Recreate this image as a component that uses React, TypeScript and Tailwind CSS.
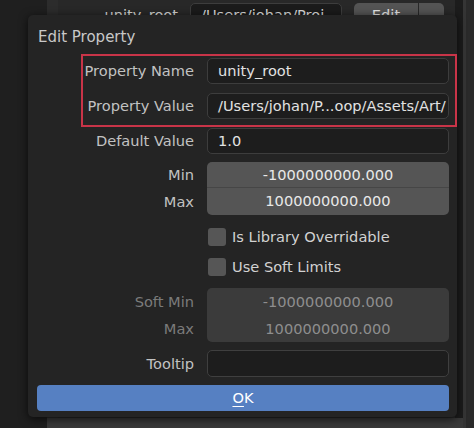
import React from "react";

const font = { fontFamily: '"DejaVu Sans", "Liberation Sans", sans-serif' };

function Field({ value }: { value: string }) {
  return (
    <div className="flex h-[26px] w-[242px] items-center rounded-[5px] border border-[#3d3d3d] bg-[#1d1d1d] pl-[10px] text-[14.6px] text-[#e2e2e2]">
      {value}
    </div>
  );
}

function Row({
  label,
  children,
  dim,
}: {
  label: string;
  children: React.ReactNode;
  dim?: boolean;
}) {
  return (
    <div className="flex items-center">
      <div
        className={`w-[157px] text-right text-[14.6px] ${
          dim ? "text-[#7a7a7a]" : "text-[#c2c2c2]"
        }`}
      >
        {label}
      </div>
      <div className="ml-[13px]">{children}</div>
    </div>
  );
}

function Checkbox({ label }: { label: string }) {
  return (
    <div className="flex h-[26px] items-center pl-[171px]">
      <div className="h-[18px] w-[18px] rounded-[3px] bg-[#565656]" />
      <span className="ml-[6px] text-[14.6px] text-[#d2d2d2]">{label}</span>
    </div>
  );
}

export default function App() {
  return (
    <div
      className="relative flex h-[428px] w-[474px] overflow-hidden bg-[#1e1e1e]"
      style={font}
    >
      {/* background editor panel */}
      <div className="w-[47px] shrink-0 bg-[#1f1f1f]" />
      <div className="flex w-[416px] flex-col">
        <div className="flex flex-1">
          <div className="w-[408px] border-l-[11px] border-[#2c2c2c] bg-[#282828]">
            <div className="mt-[3px] flex h-[24px] items-center">
              <div className="w-[120px] text-right text-[14.6px] text-[#d6d6d6]">
                unity_root
              </div>
              <div className="ml-[12px] flex h-[24px] w-[152px] items-center rounded-[5px] border border-[#3d3d3d] bg-[#1b1b1b] pl-[10px] text-[14.6px] text-[#dcdcdc]">
                /Users/johan/Proj...
              </div>
              <div className="ml-[12px] flex h-[24px] w-[64px] items-center justify-center rounded-l-[5px] bg-[#545454] text-[14.6px] text-[#e6e6e6]">
                Edit
              </div>
              <div className="ml-[1px] h-[24px] w-[25px] rounded-r-[5px] bg-[#545454]" />
            </div>
          </div>
          <div className="w-[8px] bg-[#1c1c1c]" />
        </div>
        <div className="h-[10px] bg-[#3a3a3a]" />
      </div>
      <div className="w-[3px] bg-[#353535]" />
      <div className="flex-1 bg-[#2a2a2a]" />

      {/* Edit Property dialog */}
      <div className="absolute left-[28px] top-[15px] flex h-[402px] w-[429px] flex-col rounded-[5px] bg-[#242424] pl-[9px] pr-[8px] shadow-[0_2px_10px_rgba(0,0,0,0.7)]">
        <div className="h-[43px] pl-[1px] pt-[13px] text-[15px] leading-[18px] text-[#c8c8c8]">
          Edit Property
        </div>

        <div className="flex flex-col gap-[9px]">
          <Row label="Property Name">
            <Field value="unity_root" />
          </Row>
          <Row label="Property Value">
            <Field value="/Users/johan/P...oop/Assets/Art/" />
          </Row>
          <Row label="Default Value">
            <Field value="1.0" />
          </Row>
        </div>

        <div className="mt-[8px] flex">
          <div className="flex w-[157px] flex-col text-right text-[14.6px] text-[#c2c2c2]">
            <div className="flex h-[26px] items-center justify-end">Min</div>
            <div className="flex h-[27px] items-center justify-end">Max</div>
          </div>
          <div className="ml-[13px] flex w-[242px] flex-col overflow-hidden rounded-[5px] bg-[#555555] text-[14.6px] text-[#e8e8e8]">
            <div className="flex h-[26px] items-center justify-center border-b border-[#464646]">
              -1000000000.000
            </div>
            <div className="flex h-[26px] items-center justify-center">
              1000000000.000
            </div>
          </div>
        </div>

        <div className="mt-[9px]">
          <Checkbox label="Is Library Overridable" />
        </div>
        <div className="mt-[4px]">
          <Checkbox label="Use Soft Limits" />
        </div>

        <div className="mt-[8px] flex">
          <div className="flex w-[157px] flex-col text-right text-[14.6px] text-[#7b7b7b]">
            <div className="flex h-[27px] items-center justify-end">Soft Min</div>
            <div className="flex h-[27px] items-center justify-end">Max</div>
          </div>
          <div className="ml-[13px] flex w-[242px] flex-col rounded-[5px] bg-[#3b3b3b] text-[14.6px] text-[#8e8e8e]">
            <div className="flex h-[27px] items-center justify-center">
              -1000000000.000
            </div>
            <div className="flex h-[27px] items-center justify-center">
              1000000000.000
            </div>
          </div>
        </div>

        <div className="mt-[8px]">
          <Row label="Tooltip">
            <div className="h-[27px] w-[242px] rounded-[5px] border border-[#3f3f3f] bg-[#1d1d1d]" />
          </Row>
        </div>

        <button className="mt-[8px] flex h-[26px] w-[412px] items-center justify-center rounded-[4px] bg-[#5680c2] text-[14.6px] text-white">
          <span className="underline underline-offset-[3px]">O</span>K
        </button>

        {/* annotation highlight */}
        <div className="pointer-events-none absolute left-[53px] top-[39px] h-[73px] w-[376px] border-2 border-[#c83448]" />
      </div>
    </div>
  );
}
